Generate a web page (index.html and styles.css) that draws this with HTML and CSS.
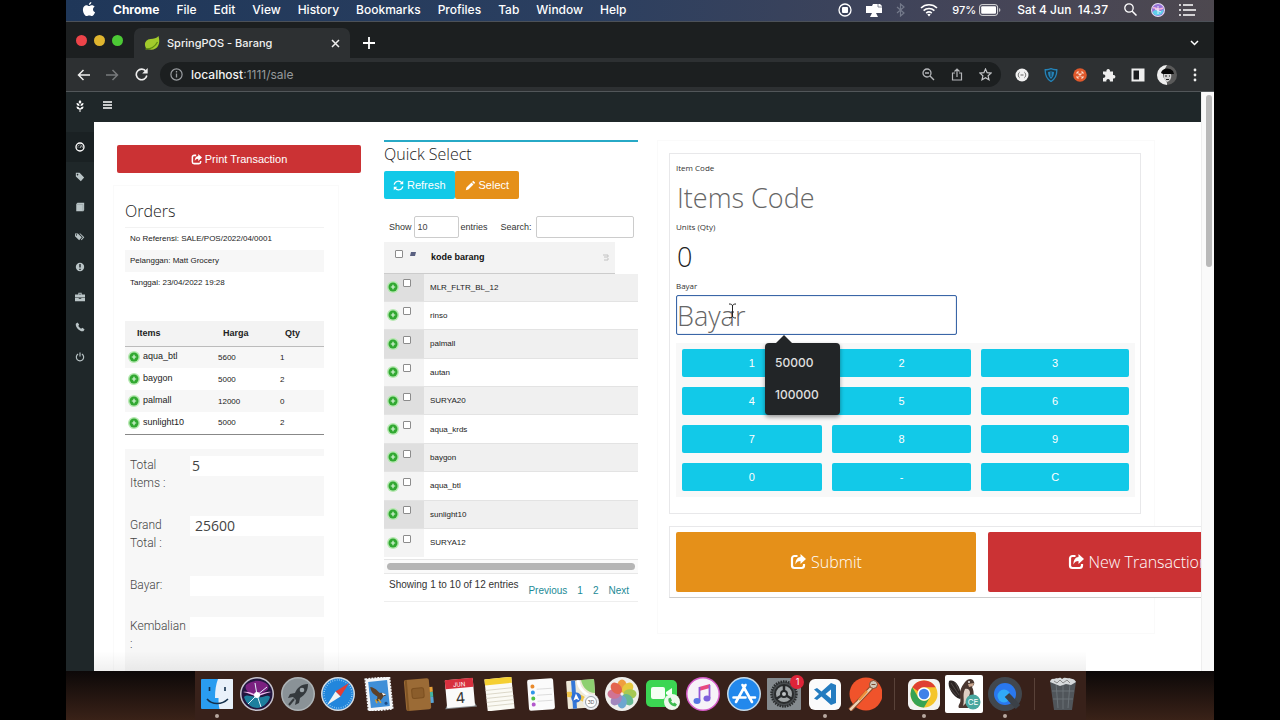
FILE: index.html
```html
<!DOCTYPE html>
<html lang="en">
<head>
<meta charset="UTF-8">
<title>SpringPOS - Barang</title>
<link rel="stylesheet" href="styles.css">
</head>
<body>

<!-- shared icons -->
<svg class="defs" aria-hidden="true">
  <symbol id="i-share" viewBox="0 0 16 16">
    <path d="M7.500 2H4.500A2.500 2.500 0 0 0 2 4.500v7A2.500 2.500 0 0 0 4.500 14h7a2.500 2.500 0 0 0 2.500-2.500V10" fill="none" stroke="currentColor" stroke-width="2.200"/>
    <path d="M10.500 0L16 5l-5.500 5V7C8 7 6.500 8 5.500 10.500 5.200 6 7.500 3.200 10.500 3z" fill="currentColor"/>
  </symbol>
  <symbol id="i-plus" viewBox="0 0 12 12">
    <circle cx="6" cy="6" r="6" fill="#b5e8b0"/>
    <circle cx="6" cy="6" r="4.500" fill="#31a831"/>
    <path d="M6 3.800v4.400M3.800 6h4.400" stroke="#d9f7d9" stroke-width="1.200"/>
  </symbol>
</svg>

<div class="screen">

  <header class="menubar">
    <svg class="apple" viewBox="0 0 14 16"><path d="M9.500 0c.1 1.500-1 3-2.600 3.100C6.700 1.700 8 .2 9.500 0zM7 4.200c.8 0 1.600-.8 3-.8 1.200 0 2.300.6 3 1.600-2.500 1.500-2.100 4.900.5 5.900-.7 1.900-2 4-3.400 4-1 0-1.500-.6-2.800-.6s-1.900.6-2.800.6C2.700 15 .5 11.300.5 8.200c0-3 1.900-4.800 3.800-4.800 1.200 0 2 .8 2.700.8z" fill="#fff"/></svg>
    <nav class="menus">
      <b>Chrome</b><span>File</span><span>Edit</span><span>View</span><span>History</span><span>Bookmarks</span><span>Profiles</span><span>Tab</span><span>Window</span><span>Help</span>
    </nav>
    <div class="status">
      <svg width="14" height="14" viewBox="0 0 14 14"><circle cx="7" cy="7" r="6" fill="none" stroke="#fff" stroke-width="1.300"/><rect x="4" y="4" width="6" height="6" rx="1" fill="#fff"/></svg>
      <svg width="16" height="14" viewBox="0 0 16 14"><path d="M0 3h6l1-2h7l2 2v7H0z" fill="#fff"/><path d="M6 10h4l2 4H4z" fill="#fff"/><path d="M12 1v3h4" fill="none" stroke="#666b7c" stroke-width=".8"/></svg>
      <svg width="10" height="14" viewBox="0 0 10 14"><path d="M1 4l7 6-3.500 3V1L8 4l-7 6" fill="none" stroke="#747a8b" stroke-width="1.200"/></svg>
      <svg width="18" height="14" viewBox="0 0 18 14"><g fill="none" stroke="#fff" stroke-width="1.600"><path d="M1 5a11.500 11.500 0 0 1 16 0"/><path d="M3.600 7.600a7.800 7.800 0 0 1 10.800 0"/><path d="M6.200 10.100a4.200 4.200 0 0 1 5.600 0"/></g><path d="M9 13.500l-1.700-2a2.500 2.500 0 0 1 3.400 0z" fill="#fff"/></svg>
      <span class="battery">97%
        <svg width="22" height="12" viewBox="0 0 22 12"><rect x=".6" y=".6" width="18" height="10.800" rx="2.500" fill="none" stroke="#ddd"/><rect x="2.200" y="2.200" width="14.800" height="7.600" rx="1" fill="#fff"/><path d="M20.200 4v4c1.500-.6 1.500-3.400 0-4z" fill="#ddd"/></svg>
      </span>
      <span class="clock">Sat 4 Jun&nbsp; 14.37</span>
      <svg width="13" height="13" viewBox="0 0 13 13"><circle cx="5" cy="5" r="4.200" fill="none" stroke="#fff" stroke-width="1.300"/><path d="M8.200 8.200L12.500 12.500" stroke="#fff" stroke-width="1.500"/></svg>
      <svg width="14" height="14" viewBox="0 0 14 14"><circle cx="7" cy="7" r="7" fill="#e6e0f4"/><circle cx="7" cy="7" r="6" fill="#9672d8"/><path d="M1.500 9.500C4 4 9 11 12.600 6A6 6 0 0 1 1.500 9.500z" fill="#5fd0ea"/><path d="M2 5c3-1 5 3 10 0" stroke="#f6b6df" stroke-width="1.500" fill="none"/><path d="M7 3v8M4 6l6 3" stroke="#fff" stroke-width=".8"/></svg>
      <svg width="17" height="12" viewBox="0 0 17 12"><path d="M0 1h2M0 6h2M0 11h2M4 1h10M4 6h13M4 11h12" stroke="#fff" stroke-width="1.700"/></svg>
    </div>
  </header>

  <div class="window">
    <div class="tabstrip">
      <div class="lights"><i class="red"></i><i class="yellow"></i><i class="green"></i></div>
      <div class="tab">
        <svg width="16" height="16" viewBox="0 0 16 16"><path d="M14.500 1c1.500 5 1 10-3 12.500-3 1.800-7 1.300-9.500-.2C-.5 9 1.500 4.500 6.500 4c3.500-.3 6-.7 8-3z" fill="#a2cb2c"/><path d="M1.500 14c4 .2 9-1.500 12-7" fill="none" stroke="#5f8d12" stroke-width="1.300"/></svg>
        <span>SpringPOS - Barang</span>
        <button class="icon-btn" aria-label="Close tab"><svg width="9" height="9" viewBox="0 0 9 9"><path d="M1 1l7 7M8 1L1 8" stroke="#eee" stroke-width="1.500"/></svg></button>
      </div>
      <button class="icon-btn new-tab" aria-label="New tab"><svg width="12" height="12" viewBox="0 0 12 12"><path d="M6 0v12M0 6h12" stroke="#fff" stroke-width="1.800"/></svg></button>
      <button class="icon-btn tab-search" aria-label="Search tabs"><svg width="9" height="6" viewBox="0 0 9 6"><path d="M1 1l3.500 3.500L8 1" fill="none" stroke="#fff" stroke-width="1.500"/></svg></button>
    </div>

    <div class="toolbar">
      <button class="icon-btn" aria-label="Back"><svg width="13" height="12" viewBox="0 0 13 12"><path d="M13 6H1.500M6.500 1l-5 5 5 5" fill="none" stroke="#eee" stroke-width="1.500"/></svg></button>
      <button class="icon-btn" aria-label="Forward"><svg width="13" height="12" viewBox="0 0 13 12"><path d="M0 6h11.500M6.500 1l5 5-5 5" fill="none" stroke="#77797c" stroke-width="1.500"/></svg></button>
      <button class="icon-btn" aria-label="Reload"><svg width="13" height="13" viewBox="0 0 13 13"><path d="M11 3.500A5.300 5.300 0 1 0 11.800 7.500" fill="none" stroke="#eee" stroke-width="1.600"/><path d="M12.700 0v5.500H7.200z" fill="#eee"/></svg></button>
      <div class="omnibox">
        <svg width="13" height="13" viewBox="0 0 13 13"><circle cx="6.500" cy="6.500" r="5.600" fill="none" stroke="#9b9ea2" stroke-width="1.200"/><path d="M6.500 5.600v4M6.500 3v1.500" stroke="#9b9ea2" stroke-width="1.300"/></svg>
        <span class="url"><b>localhost</b>:1111/sale</span>
        <svg width="13" height="13" viewBox="0 0 13 13"><circle cx="5" cy="5" r="4" fill="none" stroke="#b4b6b9" stroke-width="1.300"/><path d="M3 5h4M8 8l4 4" stroke="#b4b6b9" stroke-width="1.400"/></svg>
        <svg width="12" height="13" viewBox="0 0 12 13"><path d="M4 5H1.500v7h9V5H8M6 9V1.500M3.500 3.500L6 1l2.500 2.500" fill="none" stroke="#b4b6b9" stroke-width="1.200"/></svg>
        <svg width="13" height="13" viewBox="0 0 13 13"><path d="M6.500 1l1.600 3.700 4 .4-3 2.700.9 4-3.500-2.100L3 11.800l.9-4-3-2.700 4-.4z" fill="none" stroke="#c4c6c9" stroke-width="1.200"/></svg>
      </div>
      <div class="extensions">
        <svg width="14" height="14" viewBox="0 0 14 14"><circle cx="7" cy="7" r="6.500" fill="#f2f2f2"/><path d="M4.600 4.200c-1.400 1-.8 1.800-1.500 2.800.7 1 .1 1.800 1.500 2.800M9.400 4.200c1.400 1 .8 1.800 1.500 2.800-.7 1-.1 1.800-1.500 2.800M5.500 7h3" fill="none" stroke="#555" stroke-width=".9"/></svg>
        <svg width="14" height="14" viewBox="0 0 14 14"><path d="M7 .7c2 1 4 1.200 5.800 1C13 7 11 11 7 13.500 3 11 1 7 1.200 1.700 3 1.900 5 1.700 7 .7z" fill="#1c3340" stroke="#2583b8" stroke-width="1.300"/><path d="M7 3.500l3 .6C10 7 9 9.500 7 11 5 9.500 4 7 4 4.100z" fill="#2583b8"/><path d="M7 4v5" stroke="#1c3340"/></svg>
        <svg width="14" height="14" viewBox="0 0 14 14"><circle cx="7" cy="7" r="6.800" fill="#e0592c"/><path d="M3.500 5.500l2-2M8.500 3.500l2 2M3.500 8.500l2 2M8.500 10.500l2-2M5.500 5.500l3 3M8.500 5.500l-3 3" stroke="#fbdccc" stroke-width="1.300"/></svg>
        <svg width="14" height="14" viewBox="0 0 14 14"><path d="M1 3.500h3.500a1.800 1.800 0 1 1 3.400 0H11V7a1.800 1.800 0 1 1 0 3.400V13.500H7.800a1.800 1.800 0 1 0-3.400 0H1v-3.700a1.800 1.800 0 1 0 0-3.400z" fill="#eee"/></svg>
        <svg width="14" height="14" viewBox="0 0 14 14"><path d="M1.500 1.500h11v11h-11z" fill="#1b1d1f" stroke="#eee" stroke-width="2"/><path d="M8 1h5v12H8z" fill="#eee"/></svg>
        <svg class="avatar" width="20" height="20" viewBox="0 0 20 20"><circle cx="10" cy="10" r="10" fill="#5a5a5a"/><path d="M10 0a10 10 0 0 0 0 20c1-4-4-6-4-10s2-6 4-10z" fill="#eee"/><path d="M4 8c1-5 8-6 12-2l1 3H6z" fill="#080808"/><path d="M7 9h7c1 4-1 7-4 8-2-1-4-4-3-8z" fill="#d2d2d2"/><path d="M8 11h2M12 11h1M9 14.500h3" stroke="#222" fill="none"/></svg>
        <svg width="4" height="14" viewBox="0 0 4 14"><g fill="#eee"><circle cx="2" cy="2" r="1.400"/><circle cx="2" cy="7" r="1.400"/><circle cx="2" cy="12" r="1.400"/></g></svg>
      </div>
    </div>

    <div class="page">
      <nav class="sidebar">
        <a href="#" class="brand" aria-label="SpringPOS"><svg viewBox="0 0 12 12"><path d="M6 0l1.500 2L6 4 4.500 2zM5.500 6C3.500 6 2.500 5 2.500 3c2 0 3 1 3 3zM6.500 6c2 0 3-1 3-3-2 0-3 1-3 3zM5.500 9.500c-2 0-3-1-3-3 2 0 3 1 3 3zM6.500 9.500c2 0 3-1 3-3-2 0-3 1-3 3zM5.500 8h1v4h-1z"/></svg></a>
        <a href="#" class="active" aria-label="Dashboard"><svg viewBox="0 0 12 12"><circle cx="6" cy="6" r="4.800" fill="none" stroke="#fff" stroke-width="1.600"/><path d="M6 7l2.200-3M3 6h1M8.500 6h1M6 3v1M4 4l.7.700" stroke="#fff" stroke-width="1"/></svg></a>
        <a href="#" aria-label="Items"><svg viewBox="0 0 12 12"><path d="M1 1h4.500L11 6.700 7 11 1 5.500zM3 2.200a.9.900 0 1 0 .1 0z" fill-rule="evenodd"/></svg></a>
        <a href="#" aria-label="Catalog"><svg viewBox="0 0 12 12"><path d="M3 1h8v8.500l-1 1.500H1.500V2.500z"/><path d="M1.500 3h8v8" fill="none" stroke="#8b9698" stroke-width=".6"/></svg></a>
        <a href="#" aria-label="Prices"><svg viewBox="0 0 14 12"><path d="M0 1h4l5.500 5.500L5.800 10.500 0 5zM2 2.200a.9.900 0 1 0 .1 0zM6 1h1.500L13 6.500 9.300 10.500l-1-.8L11 6.500z" fill-rule="evenodd"/></svg></a>
        <a href="#" aria-label="Alerts"><svg viewBox="0 0 12 12"><circle cx="6" cy="6" r="5"/><path d="M6 2.500v4M6 8v1.600" stroke="#1f2729" stroke-width="1.700"/></svg></a>
        <a href="#" aria-label="Sales"><svg viewBox="0 0 12 12"><path d="M4 3V1h4v2h4v3.500H0V3h4zm1 0h2V2H5zM0 7.200h4.500v1h3v-1H12V11H0z"/></svg></a>
        <a href="#" aria-label="Contact"><svg viewBox="0 0 12 12"><path d="M1 2l2-1.500L5 3 4 4.800C5 6.300 5.800 7 7.200 8L9 7l2.500 2L10 11C6 12 0 6 1 2z"/></svg></a>
        <a href="#" aria-label="Log out"><svg viewBox="0 0 12 12"><path d="M3.700 2.500a4.400 4.400 0 1 0 4.600 0M6 .5v5" fill="none" stroke="#b9c4c6" stroke-width="1.400"/></svg></a>
      </nav>

      <div class="content">
        <div class="topnav">
          <button class="icon-btn" aria-label="Toggle menu"><svg width="9" height="8" viewBox="0 0 9 8"><path d="M0 1h9M0 4h9M0 7h9" stroke="#fff" stroke-width="1.700"/></svg></button>
        </div>

        <main class="columns">
          <section class="orders">
            <button class="btn btn-danger btn-block"><svg class="ico"><use href="#i-share"/></svg> Print Transaction</button>
            <div class="orders-card">
              <h2>Orders</h2>
              <ul class="info">
                <li>No Referensi: SALE/POS/2022/04/0001</li>
                <li>Pelanggan: Matt Grocery</li>
                <li>Tanggal: 23/04/2022 19:28</li>
              </ul>
              <table class="order-items">
                <thead><tr><th>Items</th><th>Harga</th><th>Qty</th></tr></thead>
                <tbody>
                  <tr><td><svg class="plus"><use href="#i-plus"/></svg>aqua_btl</td><td>5600</td><td>1</td></tr>
                  <tr><td><svg class="plus"><use href="#i-plus"/></svg>baygon</td><td>5000</td><td>2</td></tr>
                  <tr><td><svg class="plus"><use href="#i-plus"/></svg>palmall</td><td>12000</td><td>0</td></tr>
                  <tr><td><svg class="plus"><use href="#i-plus"/></svg>sunlight10</td><td>5000</td><td>2</td></tr>
                </tbody>
              </table>
              <div class="totals">
                <div class="total tall"><label for="t-items">Total Items :</label><input id="t-items" value="5"></div>
                <div class="total tall"><label for="t-grand">Grand Total :</label><input id="t-grand" class="num" value="25600"></div>
                <div class="total"><label for="t-bayar">Bayar:</label><input id="t-bayar"></div>
                <div class="total"><label for="t-kembali">Kembalian :</label><input id="t-kembali"></div>
              </div>
            </div>
          </section>

          <section class="quick">
            <div class="quick-box">
              <h2>Quick Select</h2>
              <div class="btn-group">
                <button class="btn btn-info"><svg class="ico" viewBox="0 0 14 14"><path d="M1.500 6A5.500 5.500 0 0 1 11.500 4M12.500 8A5.500 5.500 0 0 1 2.500 10" fill="none" stroke="currentColor" stroke-width="1.500"/><path d="M13 1v4.500H8.500zM1 13V8.500h4.500z" fill="currentColor"/></svg> Refresh</button>
                <button class="btn btn-warning"><svg class="ico" viewBox="0 0 14 14"><path d="M10.500 1l2.500 2.500-1.500 1.500L9 2.500zM8.300 3.200l2.500 2.500-6.500 6.500L1 13l.8-3.300z" fill="currentColor"/></svg> Select</button>
              </div>
              <div class="filters">
                <label for="len">Show</label>
                <select id="len"><option>10</option><option>25</option></select>
                <span>entries</span>
                <label for="search" class="search-label">Search:</label>
                <input id="search" type="text">
              </div>
              <table class="grid-head">
                <tr><th class="pick"><input type="checkbox" aria-label="Select all"><svg width="8" height="8" viewBox="0 0 8 8"><path d="M2 2h5l-1 4H1z" fill="#596080"/></svg></th><th>kode barang</th><th class="sort"><svg width="6" height="7" viewBox="0 0 6 7"><path d="M0 1h5v2H1M1 6h4V4" fill="none" stroke="#c2c2c2"/></svg></th></tr>
              </table>
              <table class="grid">
                <tr><td class="pick"><svg class="plus"><use href="#i-plus"/></svg><input type="checkbox" aria-label="MLR_FLTR_BL_12"></td><td>MLR_FLTR_BL_12</td></tr>
                <tr><td class="pick"><svg class="plus"><use href="#i-plus"/></svg><input type="checkbox" aria-label="rinso"></td><td>rinso</td></tr>
                <tr><td class="pick"><svg class="plus"><use href="#i-plus"/></svg><input type="checkbox" aria-label="palmall"></td><td>palmall</td></tr>
                <tr><td class="pick"><svg class="plus"><use href="#i-plus"/></svg><input type="checkbox" aria-label="autan"></td><td>autan</td></tr>
                <tr><td class="pick"><svg class="plus"><use href="#i-plus"/></svg><input type="checkbox" aria-label="SURYA20"></td><td>SURYA20</td></tr>
                <tr><td class="pick"><svg class="plus"><use href="#i-plus"/></svg><input type="checkbox" aria-label="aqua_krds"></td><td>aqua_krds</td></tr>
                <tr><td class="pick"><svg class="plus"><use href="#i-plus"/></svg><input type="checkbox" aria-label="baygon"></td><td>baygon</td></tr>
                <tr><td class="pick"><svg class="plus"><use href="#i-plus"/></svg><input type="checkbox" aria-label="aqua_btl"></td><td>aqua_btl</td></tr>
                <tr><td class="pick"><svg class="plus"><use href="#i-plus"/></svg><input type="checkbox" aria-label="sunlight10"></td><td>sunlight10</td></tr>
                <tr><td class="pick"><svg class="plus"><use href="#i-plus"/></svg><input type="checkbox" aria-label="SURYA12"></td><td>SURYA12</td></tr>
              </table>
              <div class="hscroll"><div class="thumb"></div></div>
              <div class="grid-foot">
                <span>Showing 1 to 10 of 12 entries</span>
                <nav><a href="#">Previous</a><a href="#">1</a><a href="#">2</a><a href="#">Next</a></nav>
              </div>
            </div>
          </section>

          <section class="cashier">
            <div class="panel entry">
              <label for="code">Item Code</label>
              <input id="code" class="big" placeholder="Items Code">
              <label for="qty">Units (Qty)</label>
              <input id="qty" class="big" value="0">
              <label for="pay">Bayar</label>
              <div class="pay">
                <input id="pay" class="big focused" placeholder="Bayar">
                <svg class="ibeam" viewBox="0 0 9 16"><path d="M1 1c2 0 3.500.5 3.500 2C4.500 1.500 6 1 8 1M4.500 3v10M1 15c2 0 3.500-.5 3.500-2 0 1.500 1.500 2 3.500 2M3 9h3" fill="none" stroke="#222"/></svg>
                <ul class="suggest"><li>50000</li><li>100000</li></ul>
              </div>
              <div class="keypad">
                <button class="btn btn-info">1</button><button class="btn btn-info">2</button><button class="btn btn-info">3</button>
                <button class="btn btn-info">4</button><button class="btn btn-info">5</button><button class="btn btn-info">6</button>
                <button class="btn btn-info">7</button><button class="btn btn-info">8</button><button class="btn btn-info">9</button>
                <button class="btn btn-info">0</button><button class="btn btn-info">-</button><button class="btn btn-info">C</button>
              </div>
            </div>
            <div class="panel actions">
              <button class="btn btn-warning btn-lg"><svg class="ico"><use href="#i-share"/></svg> Submit</button>
              <button class="btn btn-danger btn-lg"><svg class="ico"><use href="#i-share"/></svg> New Transaction</button>
            </div>
          </section>
        </main>
      </div>

      <div class="vscroll"><div class="thumb"></div></div>
    </div>
  </div>

  <footer class="desktop">
    <div class="dock">
      <div class="app open"><svg viewBox="0 0 34 34"><rect x="1" y="2" width="32" height="30" rx="1" fill="#2a9df0"/><path d="M18 2h14a1 1 0 0 1 1 1v28a1 1 0 0 1-1 1H19.500c-1-4-1-7-1-11H15c0-8 1-14 3-19z" fill="#e9f1fa"/><path d="M9.500 10v4M25 10v4M7 22c5 6 15 6 21 0" fill="none" stroke="#14304c" stroke-width="1.600"/></svg></div>
      <div class="app"><svg viewBox="0 0 34 34"><circle cx="17" cy="17" r="17" fill="#c9c6d0"/><circle cx="17" cy="17" r="15.500" fill="#22163f"/><path d="M6 8c6-5 15-6 22 0 2 5-3 7-11 10C10 17 4 14 6 8z" fill="#7a2080"/><path d="M4 20c4-4 9 2 13-2 4 6 9-2 13 2-2 7-8 11-13 11S6 27 4 20z" fill="#1d7f9e"/><path d="M3 15c6-1 10 2 14 3 4-1 9-4 14-3-5 1-10 3-14 5-4-2-9-4-14-5z" fill="#f0b8ee"/><path d="M17 18l-9 9M17 18l4 12M17 18l10-8M17 18L15 6" fill="none" stroke="#e3f3fb" stroke-width="1"/><circle cx="17" cy="18" r="3" fill="#fff"/></svg></div>
      <div class="app"><svg viewBox="0 0 34 34"><circle cx="17" cy="17" r="17" fill="#aeb4b7"/><circle cx="17" cy="17" r="15.500" fill="#8a9297"/><path d="M27 7c-7 0-11 4-13 9l-5 1-2 4 5-1 3 3-1 5 4-2 1-5c5-3 8-7 8-14z" fill="#34393d"/><circle cx="21" cy="13" r="2.300" fill="#9aa3a8"/><path d="M8 28l5-6" stroke="#34393d" stroke-width="2"/></svg></div>
      <div class="app"><svg viewBox="0 0 34 34"><circle cx="17" cy="17" r="17" fill="#d6dde3"/><circle cx="17" cy="17" r="15.500" fill="#2286dc"/><circle cx="17" cy="17" r="14" fill="none" stroke="#b9e0fa" stroke-width="1.500" stroke-dasharray=".6 1.700"/><path d="M28 6L19.500 19.500l-5-5z" fill="#e43d35"/><path d="M6 28l8.500-13.500 5 5z" fill="#f2f2f2"/></svg></div>
      <div class="app"><svg viewBox="0 0 34 34"><g transform="rotate(-6 17 17)"><path d="M5 1h24v32H5z" fill="#f4f6f8" stroke="#f4f6f8" stroke-width="2" stroke-dasharray="2 1"/><path d="M7.500 4h19v26h-19z" fill="#3f8fd8"/><path d="M9 9c5 1 7 5 9 7 3 0 5 1 6 3l-3 1c-2 4-6 5-9 3 3-1 3-2 3-4-3-2-6-5-6-10z" fill="#5c4028"/><path d="M16 22l2 4M13 22l1 4" stroke="#d2a23c" stroke-width="1.500"/><path d="M20 16l4 2-3 1z" fill="#fff"/><circle cx="23" cy="27" r="1.500" fill="#1c4d86"/></g></svg></div>
      <div class="app"><svg viewBox="0 0 34 34"><g transform="rotate(-5 17 17)"><path d="M26 11h5v5h-5z" fill="#e7a13a"/><path d="M26 16h5v5h-5z" fill="#43b5a2"/><path d="M26 21h5v6h-5z" fill="#57a5d8"/><rect x="3" y="2" width="25" height="31" rx="2" fill="#9b6b36"/><path d="M5 2v31" stroke="#805424" stroke-width="2"/><rect x="10" y="11" width="12" height="10" rx="2" fill="#8b5d2b" stroke="#7b4f20"/></g></svg></div>
      <div class="app"><svg viewBox="0 0 34 34"><g transform="rotate(-5 17 17)"><path d="M3 27l-2 4h32l-2-4z" fill="#8b9093"/><rect x="3" y="2" width="28" height="28" rx="1" fill="#fafafa"/><path d="M3 2h28v9H3z" fill="#d8303e"/><text x="17" y="9.500" class="cal-m">JUN</text><text x="17" y="26" class="cal-d">4</text></g></svg></div>
      <div class="app"><svg viewBox="0 0 34 34"><g transform="rotate(-6 17 17)"><path d="M3 1h27v32H3z" fill="#fbfaf4"/><path d="M3 1h27v6H3z" fill="#f5cf31"/><path d="M3 12h27M3 16h27M3 20h27M3 24h27M3 28h27" stroke="#d5d0bf" stroke-width=".8"/></g></svg></div>
      <div class="app"><svg viewBox="0 0 34 34"><g transform="rotate(-4 17 17)"><rect x="4" y="2" width="26" height="31" rx="2" fill="#fbfbfb"/><circle cx="9" cy="9" r="2" fill="#e98a2c"/><circle cx="9" cy="15" r="2" fill="#2f95e8"/><circle cx="9" cy="21" r="2" fill="#52c046"/><circle cx="9" cy="27" r="2" fill="#b357cc"/><path d="M13 12h15M13 18h15M13 24h15" stroke="#ddd"/></g></svg></div>
      <div class="app"><svg viewBox="0 0 34 34"><g transform="rotate(-4 17 17)"><rect x="2" y="3" width="28" height="28" rx="1" fill="#efe9d8"/><path d="M17 3h13v14c-7-1-12-6-13-14z" fill="#8ed070"/><path d="M2 14c8-1 18 5 28 15v2h-5C18 24 10 20 2 19z" fill="#f1c64b"/><path d="M14 3c0 9 7 16 16 18" fill="none" stroke="#fff" stroke-width="3"/><path d="M9 3v28" stroke="#3578d8" stroke-width="4"/><circle cx="11" cy="20" r="5" fill="#2f70d6"/><path d="M11 16l3 7-3-1.500L8 23z" fill="#fff"/></g><circle cx="26" cy="25" r="8" fill="#eef0f2"/><circle cx="26" cy="25" r="5.500" fill="#fff" stroke="#9ba3aa"/><text x="26" y="27" class="map-n">3D</text></svg></div>
      <div class="app"><svg viewBox="0 0 34 34"><circle cx="17" cy="17" r="17" fill="#efefec"/><g opacity=".9"><ellipse cx="17" cy="9" rx="4.800" ry="6.500" fill="#f0962e"/><ellipse cx="17" cy="9" rx="4.800" ry="6.500" fill="#e6c52c" transform="rotate(45 17 17)"/><ellipse cx="17" cy="9" rx="4.800" ry="6.500" fill="#9fc544" transform="rotate(90 17 17)"/><ellipse cx="17" cy="9" rx="4.800" ry="6.500" fill="#58b489" transform="rotate(135 17 17)"/><ellipse cx="17" cy="9" rx="4.800" ry="6.500" fill="#609fce" transform="rotate(180 17 17)"/><ellipse cx="17" cy="9" rx="4.800" ry="6.500" fill="#9a7cba" transform="rotate(225 17 17)"/><ellipse cx="17" cy="9" rx="4.800" ry="6.500" fill="#cd668b" transform="rotate(270 17 17)"/><ellipse cx="17" cy="9" rx="4.800" ry="6.500" fill="#e2553f" transform="rotate(315 17 17)"/></g></svg></div>
      <div class="app"><svg viewBox="0 0 34 34"><rect x="0" y="3" width="31" height="27" rx="5" fill="#3cd653"/><rect x="5" y="10" width="14" height="12" rx="2" fill="#f4fff4"/><path d="M20 15l6-4v10l-6-4z" fill="#f4fff4"/><circle cx="26" cy="25" r="8" fill="#eef8ee"/><path d="M22.500 21.500l2-1 1.500 3-1 1 2 2 1.500-1 2.500 2-1.500 2c-4 0-8-4-7-8z" fill="#3dbb50"/></svg></div>
      <div class="app"><svg viewBox="0 0 34 34"><circle cx="17" cy="17" r="17" fill="#d65bc8"/><circle cx="17" cy="17" r="15.500" fill="#f6f3f8"/><path d="M13 10l11-3v4l-11 3z" fill="#e8487e"/><path d="M13.500 10v14M23.500 8v13" stroke="#9557d4" stroke-width="1.800"/><ellipse cx="11" cy="24" rx="3.500" ry="3" fill="#5877e4"/><ellipse cx="21" cy="21.500" rx="3.500" ry="3" fill="#7d60dc"/></svg></div>
      <div class="app"><svg viewBox="0 0 34 34"><circle cx="17" cy="17" r="17" fill="#c6dcec"/><circle cx="17" cy="17" r="15.500" fill="#2288ec"/><path d="M18.500 8L9 25M15.500 8L25 25M6.500 20.500h12M22 20.500h6" stroke="#fff" stroke-width="2.600" stroke-linecap="round"/></svg></div>
      <div class="app"><svg viewBox="0 0 34 34"><rect x="0" y="1" width="34" height="32" rx="1" fill="#858b8f"/><circle cx="17" cy="17" r="12.500" fill="#494d50" stroke="#2b2d2e" stroke-width="2.500" stroke-dasharray="1.500 1"/><circle cx="17" cy="17" r="9" fill="#a0a5a7" stroke="#2a2c2d" stroke-width="2"/><path d="M17 17V8M17 17l8 5M17 17l-8 5" stroke="#26282a" stroke-width="2.500"/><circle cx="17" cy="17" r="3" fill="#bfc3c5" stroke="#26282a" stroke-width="2"/></svg><span class="badge">1</span></div>
      <div class="app open"><svg viewBox="0 0 34 34"><rect x="1" y="2" width="32" height="31" rx="6" fill="#fbfbfb"/><path d="M23 6l5 2v18l-5 2-9.500-8.500L9 23l-3-1.500 5-4.500-5-4.500L9 11l4.500 3.500zM23 12.500L17.500 17l5.500 4.500z" fill="#247cc0" fill-rule="evenodd"/></svg></div>
      <div class="app"><svg viewBox="0 0 34 34"><circle cx="18" cy="17" r="16.500" fill="#f0532b"/><path d="M24 10L9 26l-7 7" stroke="#8f4a2a" stroke-width="4.500" fill="none"/><path d="M24 10L9 26l-7 7" stroke="#ecd2b4" stroke-width="2.500" fill="none"/><path d="M19 14l-8 9" stroke="#f2913c" stroke-width="2.500"/><circle cx="25.500" cy="7.500" r="4" fill="#cfc9bb" stroke="#7d4a2e"/><path d="M23.500 7.500h4" stroke="#7d4a2e"/></svg></div>
      <i class="sep"></i>
      <div class="app open"><svg viewBox="0 0 34 34"><rect x="1" y="2" width="32" height="31" rx="6" fill="#f3f3f3"/><circle cx="17" cy="17" r="13.500" fill="#f4c52c"/><path d="M5.300 10.300A13.500 13.500 0 0 1 28.700 10.300H17a6.700 6.700 0 0 0-6 4z" fill="#df4032"/><path d="M5.300 10.300A13.500 13.500 0 0 0 17 30.500l5.800-10A6.700 6.700 0 0 1 11.200 20.300z" fill="#37a354"/><circle cx="17" cy="17" r="6.700" fill="#fff"/><circle cx="17" cy="17" r="5.200" fill="#3f81e8"/></svg></div>
      <div class="app"><svg class="large" viewBox="0 0 38 38"><rect width="38" height="38" rx="2" fill="#fff"/><path d="M15 24C8 22 2 12 4 6c5-2 9 3 11 9z" fill="#2a2423"/><path d="M6 8l8 12M10 7l4 9M5 13l7 8" stroke="#625754" stroke-width=".7"/><path d="M14 33c-2-3 3-5 1-10-1-6 1-11 5-16 3-4 8-4 9 0 1 2-1 4-2 5 3 5 2 15-3 21z" fill="#4a3730"/><path d="M20 14c3-1 5 1 5 4l-3 9-4 4c2-6-1-11 2-17z" fill="#dfd0c4"/><path d="M23 9l6-1-1 3-4 1z" fill="#c9a68f"/><circle cx="24" cy="7" r=".9" fill="#fff"/><circle cx="28" cy="27" r="7.500" fill="#49a79f"/><text x="28" y="30" class="ce">CE</text></svg></div>
      <div class="app open"><svg viewBox="0 0 34 34"><circle cx="17" cy="17" r="17" fill="#41474e"/><circle cx="17" cy="17" r="11" fill="#2a78ee"/><circle cx="16" cy="19" r="6.500" fill="#31aaf7"/><path d="M19 18L30 30" stroke="#3b4148" stroke-width="6"/></svg></div>
      <i class="sep"></i>
      <div class="app"><svg viewBox="0 0 34 34"><path d="M4 4h26l-4 29H8z" fill="#50555a"/><path d="M10 6l2 25M17 6v26M24 6l-2 25M6 14h22M7 22h20" stroke="#70777c" stroke-width=".8"/><path d="M4 5c1-5 5-2 6-4 3 1 4-2 6 1 3-3 5 0 7-1 2 1 5 0 7 4l-5 3-5-1-6 2-5-2z" fill="#d6d9db"/><path d="M8 4l3 2 3-3 3 3 4-3 3 3" fill="none" stroke="#777" stroke-width=".8"/></svg></div>
    </div>
  </footer>
</div>

</body>
</html>
```

FILE: styles.css
```css
* { box-sizing:border-box; }
body { margin:0; background:#000; font-family:"Liberation Sans", Arial, sans-serif; color:#333; }
button, input, select { font-family:inherit; margin:0; }
h2, ul { margin:0; padding:0; list-style:none; font-weight:normal; }
a { text-decoration:none; }
svg { display:block; flex:none; }
.defs { position:absolute; width:0; height:0; }

.screen { height:100vh; margin:0 66px; display:flex; flex-direction:column; overflow:hidden; }
.icon-btn { background:none; border:0; padding:0; display:flex; align-items:center; justify-content:center; }

/* mac menu bar */
.menubar { flex:none; height:22px; display:flex; align-items:center; padding:0 20px 2px 16px; background:linear-gradient(90deg, #1f3759, #2b3f60 45%, #454558 80%, #4d484f); border-bottom:1px solid #4c5158; color:#fff; font:500 12px Inter, sans-serif; white-space:nowrap; }
.apple { width:14px; height:15px; margin-right:17px; }
.menus { display:flex; gap:17px; }
.status { margin-left:auto; display:flex; align-items:center; gap:16px; }
.status > svg { margin-right:-2px; }
.battery { display:flex; align-items:center; gap:3px; font-size:11px; }

/* browser */
.window { flex:1; min-height:0; display:flex; flex-direction:column; }
.tabstrip { flex:none; height:36px; display:flex; align-items:center; background:#1c1f20; padding-right:15px; }
.lights { display:flex; gap:7px; width:68px; padding-left:10px; }
.lights i { width:11px; height:11px; border-radius:50%; }
.red { background:#ed4449; }
.yellow { background:#dfb52f; }
.green { background:#4cc935; }
.tab { align-self:flex-end; width:216px; height:30px; display:flex; align-items:center; gap:7px; padding:0 10px; background:#2d3032; border-radius:7px 7px 0 0; color:#f0f0f0; font:500 11px Inter, sans-serif; }
.tab .icon-btn { margin-left:auto; }
.new-tab { margin:6px 0 0 13px; }
.tab-search { margin:6px 0 0 auto; }
.toolbar { flex:none; height:34px; display:flex; align-items:center; gap:16px; padding:0 17px 0 11px; background:#2d3032; border-bottom:1px solid #52575a; }
.omnibox { flex:1; height:25px; margin-left:-4px; padding:0 9px 0 10px; display:flex; align-items:center; gap:16px; border-radius:13px; background:#1c1f20; color:#96999c; font:12px Inter, sans-serif; }
.omnibox b { color:#f2f2f2; font-weight:500; }
.url { margin-left:-8px; margin-right:auto; }
.extensions { display:flex; align-items:center; gap:15px; margin-left:-2px; }
.avatar { margin:0 1px 0 -3px; }

/* page shell */
.page { flex:1; min-height:0; display:flex; background:#fff; overflow:hidden; }
.sidebar { flex:none; width:28px; background:#1f2729; display:flex; flex-direction:column; }
.sidebar a { height:30px; display:flex; align-items:center; justify-content:center; }
.sidebar .brand { height:28px; margin-bottom:12px; }
.sidebar .active { background:#1a2123; }
.sidebar svg { width:10px; height:10px; fill:#b9c4c6; }
.sidebar .brand svg { width:12px; height:12px; fill:#fff; }
.content { flex:1; min-width:0; overflow:hidden; }
.topnav { height:30px; display:flex; align-items:center; padding:0 0 4px 9px; background:#1f2729; }
.vscroll { flex:none; width:13px; padding:3px 2px 0 4px; background:#fafafa; border-left:1px solid #eee; }
.vscroll .thumb { height:172px; border-radius:4px; background:#b9b9b9; }

.columns { display:grid; grid-template-columns:minmax(0, 267fr) minmax(0, 273fr) minmax(0, 498fr); padding:18px 46px 0 23px; align-items:start; }
h2 { font:300 16px/24px "Open Sans", sans-serif; color:#222; }

.btn { height:28px; border:0; border-radius:2px; padding:0 10px; display:flex; align-items:center; justify-content:center; gap:3px; color:#fff; font-size:11px; white-space:nowrap; }
.btn-block { width:100%; }
.btn-danger { background:#cb3234; }
.btn-info { background:#12c9e8; padding:0 9px; }
.btn-warning { background:#e59019; }
.ico { width:11px; height:11px; }

/* orders */
.orders { padding:5px 23px 0 0; }
.orders-card { margin:12px 22px 0 -4px; padding:13px 14px 0 11px; border:1px solid #fafafa; }
.info { margin-top:4px; font-size:8px; line-height:22px; color:#222; border-top:1px solid #f2f2f2; }
.info li { padding-left:5px; white-space:nowrap; }
.info li:nth-child(even) { background:#f7f7f7; }
.order-items { width:100%; margin-top:27px; border-collapse:collapse; table-layout:fixed; font-size:9px; color:#222; border-bottom:1px solid #888; }
.order-items th { height:25px; padding:0 0 0 12px; text-align:left; background:#f3f3f3; border-bottom:1px solid #bbb; }
.order-items th:first-child { width:86px; }
.order-items th:last-child { width:51px; }
.order-items td { height:22px; padding:0 0 0 7px; }
.order-items th:nth-child(n+2) { padding-left:12px; }
.order-items th:last-child { width:51px; padding-left:12px; }
.order-items td:nth-child(n+2) { font-size:8px; }
.order-items tbody tr:nth-child(odd) { background:#f7f7f7; }
.order-items td:first-child { padding-left:3px; }
.plus { display:inline-block; width:12px; height:12px; vertical-align:middle; }
.order-items .plus { margin-right:3px; }
.totals { margin-top:14px; padding:7px 0 40px 5px; background:#f7f7f7; }
.total { display:flex; align-items:flex-start; min-height:41px; }
.total.tall { min-height:60px; }
.total label { width:60px; padding-right:8px; font:300 12px/18px Roboto, sans-serif; color:#444; }
.total input { flex:1; min-width:0; height:20px; border:0; padding:0 2px; background:#fff; font:14px "Open Sans", sans-serif; color:#444; }
.total .num { padding-left:5px; }

/* quick select */
.quick { padding-right:19px; }
.quick-box { border-top:2px solid #27a9c6; border-bottom:1px solid #eee; }
.btn-group { display:flex; margin-top:5px; }
.filters { display:flex; align-items:center; margin-top:17px; padding:0 4px 0 5px; font-size:9px; }
.filters select, .filters input { appearance:none; height:22px; border:1px solid #ccc; border-radius:2px; background:#fff; color:#444; font-size:9px; padding:0 3px; }
.filters select { width:45px; margin:0 2px; }
.filters input { flex:1; min-width:0; margin-left:4px; }
.search-label { margin-left:13px; }
.grid-head, .grid { width:100%; border-collapse:collapse; table-layout:fixed; font-size:8px; color:#222; }
.grid-head { width:91%; margin-top:4px; background:#f3f3f3; border-bottom:1px solid #ccc; font-size:9px; }
.grid-head th { height:31px; padding:0 0 0 6px; text-align:left; color:#111; }
.grid-head .pick svg { display:inline-block; margin-left:6px; }
.grid-head .pick { width:41px; padding:0 0 4px 11px; }
.grid-head .sort { width:18px; }
.pick input { width:8px; height:8px; appearance:none; background:#fff; border:1px solid #8c8c8c; border-radius:1px; vertical-align:top; }
.grid { height:283px; }
.grid td { padding:0 0 0 6px; border-bottom:1px solid #e3e3e3; }
.grid .pick { width:40px; padding-left:3px; background:#f4f4f4; line-height:20px; white-space:nowrap; }
.grid .pick input { margin:2px 0 0 4px; }
.grid tr:nth-child(odd) { background:#f0f0f0; }
.grid tr:nth-child(odd) .pick { background:#dfdfdf; }
.grid tr:last-child td { border-bottom:0; }
.hscroll { margin-top:2px; padding:3px; border-top:1px solid #e5e5e5; border-bottom:1px solid #e8e8e8; background:#fafafa; }
.hscroll .thumb { height:7px; border-radius:4px; background:#b5b5b5; }
.grid-foot { height:27px; display:flex; justify-content:space-between; padding:4px 9px 0 5px; font-size:10px; line-height:14px; white-space:nowrap; }
.grid-foot nav { display:flex; gap:10px; padding-top:6px; }
.grid-foot a { color:#1c8a96; }

/* cashier */
.cashier { height:494px; padding:12px 13px 0 11px; border:1px solid #fafafa; }
.panel { border:1px solid #e8e8ea; background:#fff; }
.entry { padding:5px 5px 16px 6px; }
.entry label { display:block; font:8px/18px "Open Sans", sans-serif; color:#333; }
.big { display:block; width:281px; height:40px; margin-bottom:1px; border:1px solid transparent; border-radius:2px; padding:0; background:#fff; color:#222; font:300 27px "Open Sans", sans-serif; outline:none; }
.big::placeholder { color:#666; opacity:1; }
.big.focused { border-color:#3a66a7; box-shadow:inset 0 0 1px #3a66a7; }
.pay { position:relative; }
.ibeam { position:absolute; left:52px; top:8px; width:9px; height:16px; }
.suggest { position:absolute; left:89px; top:48px; z-index:2; width:75px; padding:4px 10px; background:#222527; border-radius:4px; color:#e0e0e0; font:500 12px/32px Inter, sans-serif; box-shadow:0 2px 4px rgba(0,0,0,.4); }
.suggest::before { content:""; position:absolute; left:11px; top:-8px; border:8px solid transparent; border-top:0; border-bottom-color:#222527; }
.keypad { display:grid; grid-template-columns:140fr 140fr 148fr; gap:10px; margin-top:8px; padding:6px; background:#f8f8f8; }
.actions { display:flex; gap:12px; width:640px; margin-top:12px; padding:5px 6px; border-bottom-color:#ccc; }
.btn-lg { flex:none; width:300px; height:60px; gap:5px; font:300 16px "Open Sans", sans-serif; }
.btn-lg .ico { width:16px; height:16px; }

/* dock */
.desktop { position:relative; flex:none; height:49px; background:linear-gradient(#0c0808, #3a2218); display:flex; justify-content:center; }
.desktop::before { content:""; position:absolute; left:28px; right:128px; top:-20px; height:20px; background:linear-gradient(transparent, rgba(0,0,0,.06)); }
.dock { width:78%; max-width:891px; padding:0 2px; display:flex; background:#38211a; }
.app { position:relative; flex:1; display:flex; justify-content:center; padding-top:6px; }
.app svg { width:34px; height:34px; }
.app svg.large { width:38px; height:38px; margin-top:-2px; }
.app.open::after { content:""; position:absolute; left:50%; bottom:2px; width:4px; height:4px; margin-left:-2px; border-radius:50%; background:#b8a8a0; }
.badge { position:absolute; right:0; top:4px; width:14px; height:14px; border-radius:50%; background:#df2438; color:#fff; font:9px/14px Inter, sans-serif; text-align:center; }
.sep { width:18px; display:flex; justify-content:center; padding:7px 0 10px; }
.sep::before { content:""; width:1px; background:#594239; }
.cal-m { font:6px Inter, sans-serif; fill:#fff; text-anchor:middle; }
.cal-d { font:15px Inter, sans-serif; fill:#333; text-anchor:middle; }
.map-n { font:5px Inter, sans-serif; fill:#555; text-anchor:middle; }
.ce { font:8px Inter, sans-serif; fill:#fff; text-anchor:middle; }
```
